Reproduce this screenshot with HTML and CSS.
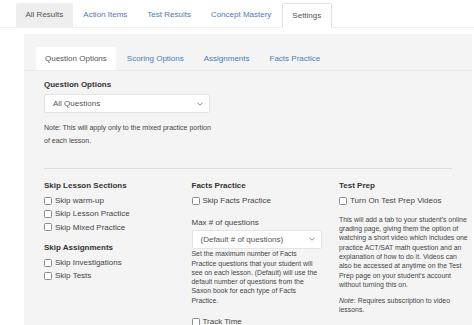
FILE: index.html
```html
<!DOCTYPE html>
<html lang="en">
<head>
  <meta charset="UTF-8" />
  <meta name="viewport" content="width=device-width, initial-scale=1.0"/>
  <title>Settings</title>
  <link rel="stylesheet" href="styles.css">
</head>
<body>
  <div class="top-tabs">
    <a class="tab tab-gray">All Results</a>
    <a class="tab">Action Items</a>
    <a class="tab">Test Results</a>
    <a class="tab">Concept Mastery</a>
    <a class="tab tab-active">Settings</a>
  </div>

  <div class="panel">
    <div class="sub-tabs">
      <a class="sub-tab sub-tab-active">Question Options</a>
      <a class="sub-tab">Scoring Options</a>
      <a class="sub-tab">Assignments</a>
      <a class="sub-tab">Facts Practice</a>
    </div>

    <div class="panel-body">
      <div class="field-label">Question Options</div>
      <div class="select select-wide">
        <span>All Questions</span>
        <svg class="chevron" width="6" height="4" viewBox="0 0 6 4"><path d="M0.5 0.8 L3 3.2 L5.5 0.8" fill="none" stroke="#777" stroke-width="0.9"/></svg>
      </div>
      <p class="note">Note: This will apply only to the mixed practice portion of each lesson.</p>

      <hr class="divider">

      <div class="cols">
        <div class="col">
          <div class="heading">Skip Lesson Sections</div>
          <label class="check"><input type="checkbox"> Skip warm-up</label>
          <label class="check"><input type="checkbox"> Skip Lesson Practice</label>
          <label class="check"><input type="checkbox"> Skip Mixed Practice</label>

          <div class="heading heading-next">Skip Assignments</div>
          <label class="check"><input type="checkbox"> Skip Investigations</label>
          <label class="check"><input type="checkbox"> Skip Tests</label>
        </div>

        <div class="col">
          <div class="heading">Facts Practice</div>
          <label class="check"><input type="checkbox"> Skip Facts Practice</label>

          <div class="plain-label">Max # of questions</div>
          <div class="select">
            <span>(Default # of questions)</span>
            <svg class="chevron" width="6" height="4" viewBox="0 0 6 4"><path d="M0.5 0.8 L3 3.2 L5.5 0.8" fill="none" stroke="#777" stroke-width="0.9"/></svg>
          </div>
          <p class="help help-tight">Set the maximum number of Facts Practice questions that your student will see on each lesson. (Default) will use the default number of questions from the Saxon book for each type of Facts Practice.</p>

          <label class="check check-spaced"><input type="checkbox"> Track Time</label>
        </div>

        <div class="col">
          <div class="heading">Test Prep</div>
          <label class="check"><input type="checkbox"> Turn On Test Prep Videos</label>
          <p class="help">This will add a tab to your student's online grading page, giving them the option of watching a short video which includes one practice ACT/SAT math question and an explanation of how to do it. Videos can also be accessed at anytime on the Test Prep page on your student's account without turning this on.</p>
          <p class="help help-note"><em>Note</em>: Requires subscription to video lessons.</p>
        </div>
      </div>
    </div>
  </div>
</body>
</html>
```

FILE: styles.css
```css
html, body {
  height: 100%;
}

body {
  margin: 0;
  background: #fff;
  font-family: 'Liberation Sans', Arial, sans-serif;
  color: #555;
  overflow: hidden;
}

.top-tabs {
  display: flex;
  padding: 3px 0 0 16px;
  border-bottom: 1px solid #f0f0f0;
  height: 24px;
}

.tab {
  padding: 0 9.5px;
  margin-right: 1px;
  line-height: 24px;
  font-size: 8px;
  color: #4a7db8;
  border-radius: 2px 2px 0 0;
}

.tab-gray {
  background: #eeeeee;
  color: #555;
}

.tab-active {
  background: #fff;
  color: #555;
  border: 1px solid #e2e2e2;
  border-bottom-color: #fff;
  line-height: 23px;
  margin-bottom: -1px;
}

.panel {
  margin: 6px 2px 0 24px;
  background: #f4f4f4;
  height: 300px;
}

.sub-tabs {
  display: flex;
  padding: 13px 0 0 12px;
  border-bottom: 1px solid #ebebeb;
}

.sub-tab {
  padding: 0 9px;
  margin-right: 2px;
  line-height: 23px;
  font-size: 8px;
  color: #4a7db8;
}

.sub-tab-active {
  background: #fff;
  color: #555;
}

.panel-body {
  padding: 8px 20px 0 20px;
}

.field-label,
.heading {
  font-size: 8px;
  font-weight: bold;
  line-height: 11px;
  color: #333;
}

.field-label {
  margin-bottom: 4px;
}

.select {
  display: flex;
  align-items: center;
  justify-content: space-between;
  box-sizing: border-box;
  height: 19px;
  padding: 0 6px 0 8px;
  background: #fff;
  border: 1px solid #e4e4e4;
  border-radius: 2px;
  font-size: 8px;
  color: #555;
}

.select-wide {
  width: 166px;
}

.note {
  width: 168px;
  margin: 8px 0 0;
  font-size: 7px;
  line-height: 13px;
  color: #444;
}

.divider {
  margin: 21px 0 0;
  border: none;
  border-top: 1px solid #dcdcdc;
}

.cols {
  display: grid;
  grid-template-columns: 130px 130px 130px;
  column-gap: 17.5px;
  margin-top: 11px;
}

.heading {
  margin-bottom: 3px;
}

.heading-next {
  margin-top: 8px;
}

.check {
  display: flex;
  align-items: center;
  height: 13.3px;
  font-size: 8px;
  color: #444;
  white-space: nowrap;
}

.check input {
  appearance: none;
  -webkit-appearance: none;
  box-sizing: border-box;
  width: 8px;
  height: 8px;
  margin: 0 3px 0 0;
  border: 1px solid #8a8a8a;
  border-radius: 1.5px;
  background: #fff;
}

.check-spaced {
  margin-top: 10px;
}

.plain-label {
  margin-top: 10px;
  margin-bottom: 1.5px;
  font-size: 8px;
  line-height: 11px;
  color: #444;
}

.help {
  margin: 7.5px 0 0;
  font-size: 6.9px;
  line-height: 9.3px;
  color: #444;
}

.help em {
  padding-right: 0.3px;
}

.help-tight {
  margin-top: 0.5px;
}

.help-note {
  margin-top: 6.5px;
}
```
